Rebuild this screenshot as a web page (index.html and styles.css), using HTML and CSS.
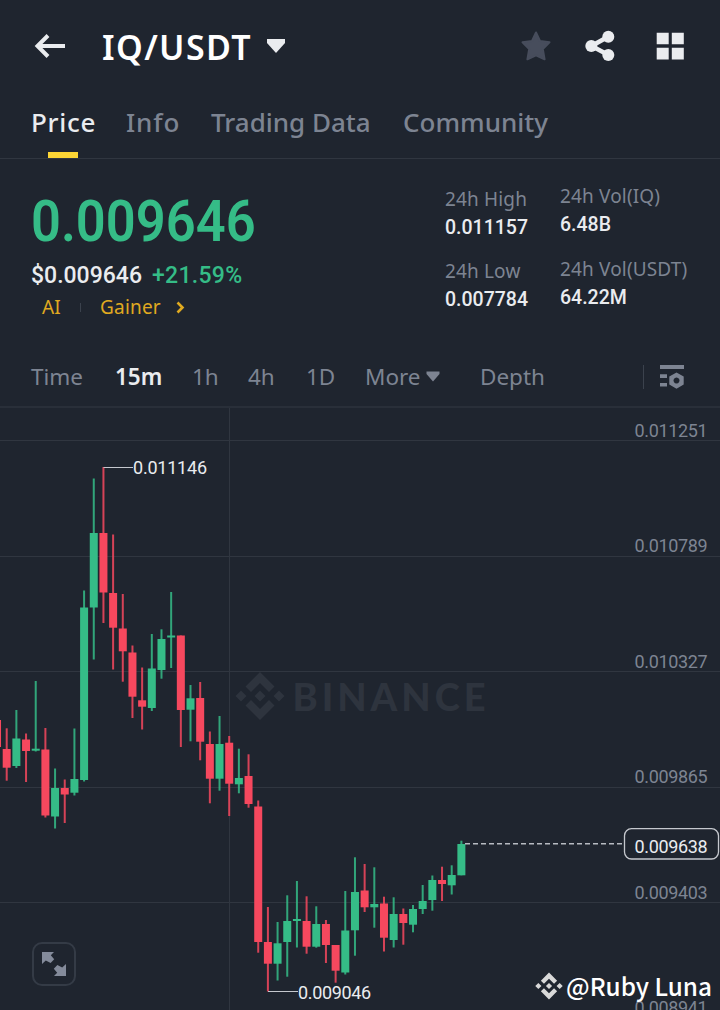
FILE: index.html
```html
<!DOCTYPE html>
<html lang="en">
<head>
  <meta charset="UTF-8">
  <meta name="viewport" content="width=device-width, initial-scale=1.0">
  <title>IQ/USDT</title>
  <link rel="stylesheet" href="styles.css">
</head>
<body>
  <header class="header">
    <svg class="back" width="32" height="26" viewBox="0 0 32 26">
      <path d="M14 2.5 L3.5 13 L14 23.5 M3.5 13 H31" fill="none" stroke="#eaecef" stroke-width="4"/>
    </svg>
    <h1>IQ/USDT</h1>
    <svg class="caret" width="20" height="16" viewBox="0 0 20 16">
      <path d="M1 1 H19 V5 L10 15 L1 5 Z" fill="#eaecef"/>
    </svg>
    <div class="header-icons">
      <svg width="32" height="32" viewBox="0 0 32 32">
        <path d="M16 2.5 L20 11 L29.5 12.3 L22.8 19 L24.6 29.3 L16 25.3 L7.4 29.3 L9.2 19 L2.5 12.3 L12 11 Z" fill="#474d5c" stroke="#474d5c" stroke-width="2" stroke-linejoin="round"/>
      </svg>
      <svg width="32" height="32" viewBox="0 0 32 32">
        <path d="M24.5 6.5 L7.5 16 L24.5 25" fill="none" stroke="#eaecef" stroke-width="4.5"/>
        <circle cx="24.3" cy="6.7" r="6" fill="#eaecef"/>
        <circle cx="7.3" cy="16" r="6" fill="#eaecef"/>
        <circle cx="24.3" cy="25" r="6" fill="#eaecef"/>
      </svg>
      <svg class="grid-icon" width="32" height="32" viewBox="0 0 32 32">
        <path d="M2.7 2.7h12v11.6h-12z M17.8 2.7h12v11.6h-12z M2.7 17.8h12v11.6h-12z M17.8 17.8h12v11.6h-12z" fill="#eaecef"/>
      </svg>
    </div>
  </header>

  <nav class="tabs">
    <a class="tab active">Price</a>
    <a class="tab tab-info">Info</a>
    <a class="tab">Trading Data</a>
    <a class="tab">Community</a>
  </nav>

  <section class="summary">
    <div class="price-box">
      <div class="price">0.009646</div>
      <div class="sub-price"><span class="usd">$0.009646</span><span class="change">+21.59%</span></div>
      <div class="tags">
        <span>AI</span>
        <i class="tag-line"></i>
        <span>Gainer</span>
        <svg width="9" height="13" viewBox="0 0 9 13"><path d="M1.5 1.5 L6.5 6.5 L1.5 11.5" fill="none" stroke="#e0aa20" stroke-width="2.6"/></svg>
      </div>
    </div>
    <div class="stats">
      <div class="stat"><p>24h High</p><b>0.011157</b></div>
      <div class="stat"><p>24h Low</p><b>0.007784</b></div>
    </div>
    <div class="stats stats-vol">
      <div class="stat"><p>24h Vol(IQ)</p><b>6.48B</b></div>
      <div class="stat"><p>24h Vol(USDT)</p><b>64.22M</b></div>
    </div>
  </section>

  <div class="intervals">
    <span>Time</span>
    <span class="selected">15m</span>
    <span>1h</span>
    <span>4h</span>
    <span>1D</span>
    <span>More <svg width="14" height="11" viewBox="0 0 14 11"><path d="M.5 .5 H13.5 V3 L7 10.5 L.5 3 Z" fill="#7d8492"/></svg></span>
    <span>Depth</span>
    <div class="chart-settings">
      <svg width="24" height="24" viewBox="0 0 24 24" fill="#7d8492">
        <path d="M0 0h24v4H0z M0 9.3h7v3.6H0z M0 18h7v3.6H0z"/>
        <path fill-rule="evenodd" d="M16.5 7.5 L23.7 11.6 V19.6 L16.5 23.7 L9.3 19.6 V11.6 Z M16.5 12.6 a3 3 0 1 0 .01 0 Z"/>
      </svg>
    </div>
  </div>

  <main class="chart">
    <svg width="720" height="602" viewBox="0 408 720 602">
      <defs>
        <g id="logo">
          <path d="M0 -24 L14.5 -9.5 L9 -4 L0 -13 L-9 -4 L-14.5 -9.5 Z M0 24 L14.5 9.5 L9 4 L0 13 L-9 4 L-14.5 9.5 Z M0 -5.5 L5.5 0 L0 5.5 L-5.5 0 Z M-19 -5.5 L-13.5 0 L-19 5.5 L-24.5 0 Z M19 -5.5 L24.5 0 L19 5.5 L13.5 0 Z"/>
        </g>
      </defs>
      <path class="grid" d="M0 440.5H720 M0 556.5H720 M0 671.5H720 M0 787.5H720 M0 902.5H720 M229.5 408V1010"/>
      <g class="watermark">
        <use href="#logo" x="260" y="696"/>
        <text x="292.5" y="710.5" textLength="193">BINANCE</text>
      </g>
      <g id="candles"></g>
      <path class="marker" d="M103.5 467.5H133 M268 991.5H298"/>
      <text class="marker-text" x="133" y="474" textLength="74">0.011146</text>
      <text class="marker-text" x="298" y="999" textLength="73">0.009046</text>
      <g class="axis">
        <text x="634.5" y="437" textLength="73">0.011251</text>
        <text x="634.5" y="552" textLength="73">0.010789</text>
        <text x="634.5" y="668" textLength="73">0.010327</text>
        <text x="634.5" y="783" textLength="73">0.009865</text>
        <text x="634.5" y="899" textLength="73">0.009403</text>
        <text x="634.5" y="1014" textLength="73">0.008941</text>
      </g>
      <path class="last-line" d="M465 843.7H624"/>
      <rect class="last-box" x="624.5" y="828.7" width="94" height="30.3" rx="7"/>
      <text class="last-text" x="634.5" y="853" textLength="73">0.009638</text>
    </svg>
    <button class="expand">
      <svg width="24" height="24" viewBox="0 0 24 24" fill="#848b9b">
        <path d="M0 0h12L8.8 3.3l3.4 3.9-3.6 3.8-4.8-2.6L0 12z M24 24H12l3.2-3.3-3.4-3.9 3.6-3.8 4.8 2.6L24 12z"/>
      </svg>
    </button>
    <div class="author">
      <svg width="28" height="28" viewBox="-25 -25 50 50" fill="#d9d9d9"><use href="#logo"/></svg>
      <span>@Ruby Luna</span>
    </div>
  </main>

  <script>
    // [up/down, high, low, body top, body bottom]
    const candles = [
      ['d', 720, 747, 720, 747], ['d', 728.3, 780.7, 749, 767.7], ['u', 710, 768, 738.5, 766],
      ['d', 733.5, 782, 739.5, 751], ['u', 681, 751.5, 748.7, 750.7], ['d', 728, 817.5, 749.5, 815.5],
      ['u', 768.5, 828.5, 788, 816.5], ['d', 779.5, 823, 788, 794.5], ['u', 728.5, 795.5, 779, 792.7],
      ['u', 590.5, 781.5, 607.5, 780], ['u', 478.5, 659.5, 533, 607.5], ['d', 467, 623, 533, 592.5],
      ['d', 534.5, 669.5, 593, 627.7], ['d', 594, 681.7, 628.5, 651.3], ['d', 645.5, 718, 652.5, 696.7],
      ['d', 667.5, 729.5, 700.3, 706.7], ['u', 634, 711, 668.5, 708], ['u', 629.3, 678.7, 639, 670],
      ['u', 592, 668, 635.5, 637.5], ['d', 635.5, 747, 635.5, 710], ['u', 685, 741.3, 698.3, 709.7],
      ['d', 682, 760.3, 698, 741.7], ['d', 731.5, 803.3, 744, 778.7], ['u', 716, 790.7, 744, 778.7],
      ['d', 736, 816, 742.7, 783.7], ['u', 748.7, 793.3, 778, 784.3], ['d', 754.3, 807.7, 776, 804],
      ['d', 800.5, 952.7, 806.5, 942], ['d', 907, 991.5, 942, 963.7], ['u', 922, 980.5, 943.3, 963.7],
      ['u', 895.3, 976.7, 921, 942], ['u', 881, 947.5, 919, 921], ['d', 896.3, 953.7, 921, 946.7],
      ['u', 906.3, 947.7, 924, 946.7], ['d', 920, 963, 924, 945], ['d', 945, 982.7, 945, 970.7],
      ['u', 891, 974.5, 930.5, 972.5], ['u', 857.3, 955.7, 892, 930.3], ['d', 864, 912, 890.5, 907.3],
      ['u', 867.3, 927.7, 904, 907.3], ['d', 896.7, 951.5, 903.5, 937.7], ['u', 897.3, 947.5, 914, 940],
      ['d', 908.5, 944.7, 914, 923], ['u', 905, 932.3, 909, 924.7], ['u', 885, 914, 901, 909],
      ['u', 875.5, 910.7, 880, 900], ['d', 866.7, 901, 880, 884], ['u', 865.3, 894.5, 875, 885.3],
      ['u', 840.7, 875.3, 844, 875.3]
    ];

    const step = 9.674;
    let shapes = '';
    candles.forEach(([dir, high, low, top, bottom], i) => {
      const x = 6.7 + (i - 1) * step;
      shapes += `<g class="${dir}"><rect class="wick" x="${x - 1}" y="${high}" width="2" height="${low - high}"/>` +
        `<rect x="${x - 4}" y="${top}" width="8" height="${bottom - top}"/></g>`;
    });
    document.getElementById('candles').innerHTML = shapes;
  </script>
</body>
</html>
```
FILE: styles.css
```css
:root {
  --bg: #1f252f;
  --line: #303640;
  --text: #eaecef;
  --muted: #7d8492;
  --green: #35bc87;
  --red: #f6485e;
  --yellow: #fcd535;
}

* {
  box-sizing: border-box;
}

body {
  margin: 0;
  width: 720px;
  height: 1010px;
  overflow: hidden;
  background: var(--bg);
  color: var(--text);
  font-family: "Noto Sans", sans-serif;
  white-space: nowrap;
}

p, h1 {
  margin: 0;
}

svg {
  display: block;
}

.header {
  display: flex;
  align-items: center;
  height: 92px;
  padding: 0 34px;
}

h1 {
  margin-left: 36px;
  width: 149px;
  color: #fff;
  font-size: 34px;
  font-weight: 600;
  line-height: 48px;
  letter-spacing: 1.4px;
  margin-top: 1px;
}

.caret {
  margin-left: 15px;
}

.header-icons {
  display: flex;
  gap: 32px;
  margin-left: auto;
}

.grid-icon {
  margin-left: 6px;
}

.tabs {
  display: grid;
  grid-template-columns: 95px 85px 192px auto;
  height: 67px;
  padding-left: 31px;
  border-bottom: 1px solid var(--line);
}

.tab {
  position: relative;
  color: var(--muted);
  font-size: 26px;
  font-weight: 500;
  line-height: 60px;
}

.tab.active {
  color: var(--text);
  letter-spacing: .7px;
}

.tab-info {
  letter-spacing: .9px;
}

.tab.active::after {
  content: "";
  position: absolute;
  left: 17px;
  bottom: 0;
  width: 30px;
  height: 6px;
  background: var(--yellow);
}

.summary {
  display: flex;
  height: 188px;
  padding-left: 31px;
}

.price-box {
  width: 414px;
  padding-top: 30px;
}

.price {
  color: var(--green);
  font: 600 57px/66px Roboto, sans-serif;
  transform: scaleX(.92);
  transform-origin: left;
}

.sub-price {
  display: flex;
  gap: 10px;
  margin-top: 1px;
  font: 500 23px/40px Roboto, sans-serif;
}

.change {
  color: var(--green);
  letter-spacing: .3px;
}

.tags {
  display: flex;
  align-items: center;
  height: 22px;
  padding-left: 11px;
  color: #e0aa20;
  font-size: 19px;
  letter-spacing: .2px;
}

.tag-line {
  width: 1px;
  height: 9px;
  margin: 0 19px;
  background: #3b424d;
}

.tags svg {
  margin-left: 15px;
}

.stats {
  width: 115px;
  padding-top: 27px;
}

.stats-vol {
  padding-top: 24px;
}

.stat {
  height: 72px;
}

.stats-vol .stat {
  height: 73px;
}

.stat p {
  color: var(--muted);
  font-size: 19px;
  line-height: 27px;
  letter-spacing: .15px;
}

.stat b {
  display: block;
  font: 500 19.5px/29px Roboto, sans-serif;
}

.intervals {
  display: grid;
  grid-template-columns: 84px 77px 56px 58px 59px 115px 163px auto;
  height: 61px;
  padding-left: 31px;
  border-bottom: 2px solid #292f39;
  color: var(--muted);
  font-size: 22.5px;
  line-height: 60px;
}

.intervals svg {
  display: inline-block;
}

.intervals span svg {
  vertical-align: 3px;
}

.selected {
  color: var(--text);
  font-weight: 600;
}

.chart-settings {
  display: flex;
  align-items: center;
  height: 24px;
  margin-top: 18px;
  padding-left: 16px;
  border-left: 1px solid #3b424d;
}

.chart {
  position: relative;
}

.grid {
  stroke: var(--line);
  fill: none;
}

.watermark {
  fill: #2e343e;
  font: 900 38px Lato, sans-serif;
}

.u {
  fill: var(--green);
}

.d {
  fill: var(--red);
}

.wick {
  opacity: .85;
}

.marker {
  stroke: #c5c8ce;
}

.marker-text,
.last-text {
  fill: var(--text);
  font: 400 18px Roboto, sans-serif;
}

.axis {
  fill: var(--muted);
  font: 400 18px Roboto, sans-serif;
}

.last-line {
  stroke: #b7bbc2;
  stroke-width: 1.6;
  stroke-dasharray: 5 3;
}

.last-box {
  fill: var(--bg);
  stroke: #c5c8ce;
  stroke-width: 1.3;
}

.expand {
  position: absolute;
  left: 32px;
  top: 534px;
  width: 44px;
  height: 44px;
  padding: 8px;
  background: none;
  border: 2px solid #343b46;
  border-radius: 10px;
}

.author {
  position: absolute;
  right: 8px;
  bottom: 5px;
  display: flex;
  align-items: center;
  gap: 3px;
  color: #fff;
  font: 500 24.3px/38px "Noto Sans CJK SC", sans-serif;
}
```
